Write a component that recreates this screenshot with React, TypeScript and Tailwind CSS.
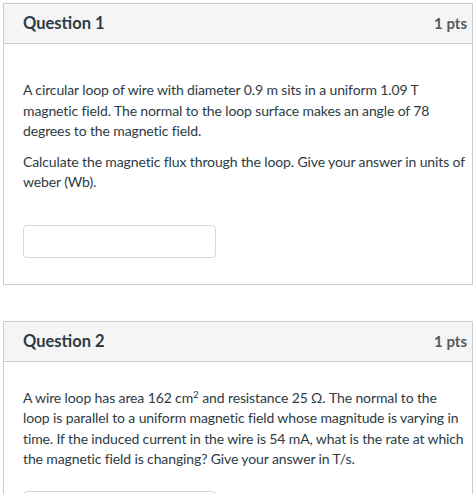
import React from "react";

const font = { fontFamily: "Lato, 'Open Sans', sans-serif" };

function Header({ title }: { title: string }) {
  return (
    <div className="flex h-[40px] items-center justify-between border-b border-[#c7cdd1] bg-[#f5f5f5] pl-[19px] pr-[5px]">
      <span className="text-[16.5px] font-bold text-[#2d3b45]">{title}</span>
      <span className="text-[15px] font-bold text-[#555a5e]">1 pts</span>
    </div>
  );
}

export default function App() {
  return (
    <div className="min-h-[494px] w-[474px] overflow-hidden bg-white pt-[3px]" style={font}>
      <div className="ml-[3px] w-[470px] border border-[#c7cdd1]">
        <Header title="Question 1" />
        <div className="pl-[19px] pr-[4px] pb-[26px] pt-[36px] text-[14px] leading-[20.5px] tracking-[-0.12px] text-[#2d3b45]">
          <p>
            A circular loop of wire with diameter 0.9 m sits in a uniform 1.09 T magnetic field. The normal to the
            loop surface makes an angle of 78 degrees to the magnetic field.
          </p>
          <p className="mt-[10px]">
            Calculate the magnetic flux through the loop. Give your answer in units of weber (Wb).
          </p>
          <div className="mt-[32px] h-[33px] w-[193px] rounded-[4px] border border-[#d4d8db] bg-white" />
        </div>
      </div>
      <div className="ml-[3px] mt-[36px] w-[470px] border border-[#c7cdd1]">
        <Header title="Question 2" />
        <div className="pl-[19px] pr-[1px] pb-[26px] pt-[26px] text-[14px] leading-[20.5px] tracking-[-0.12px] text-[#2d3b45]">
          <p>
            A wire loop has area 162 cm<sup className="text-[10px]">2</sup> and resistance 25 Ω. The normal to the
            <br />
            loop is parallel to a uniform magnetic field whose magnitude is varying in
            <br />
            time. If the induced current in the wire is 54 mA, what is the rate at which
            <br />
            the magnetic field is changing? Give your answer in T/s.
          </p>
          <div className="mt-[21px] h-[33px] w-[193px] rounded-[4px] border border-[#d4d8db] bg-white" />
        </div>
      </div>
    </div>
  );
}
